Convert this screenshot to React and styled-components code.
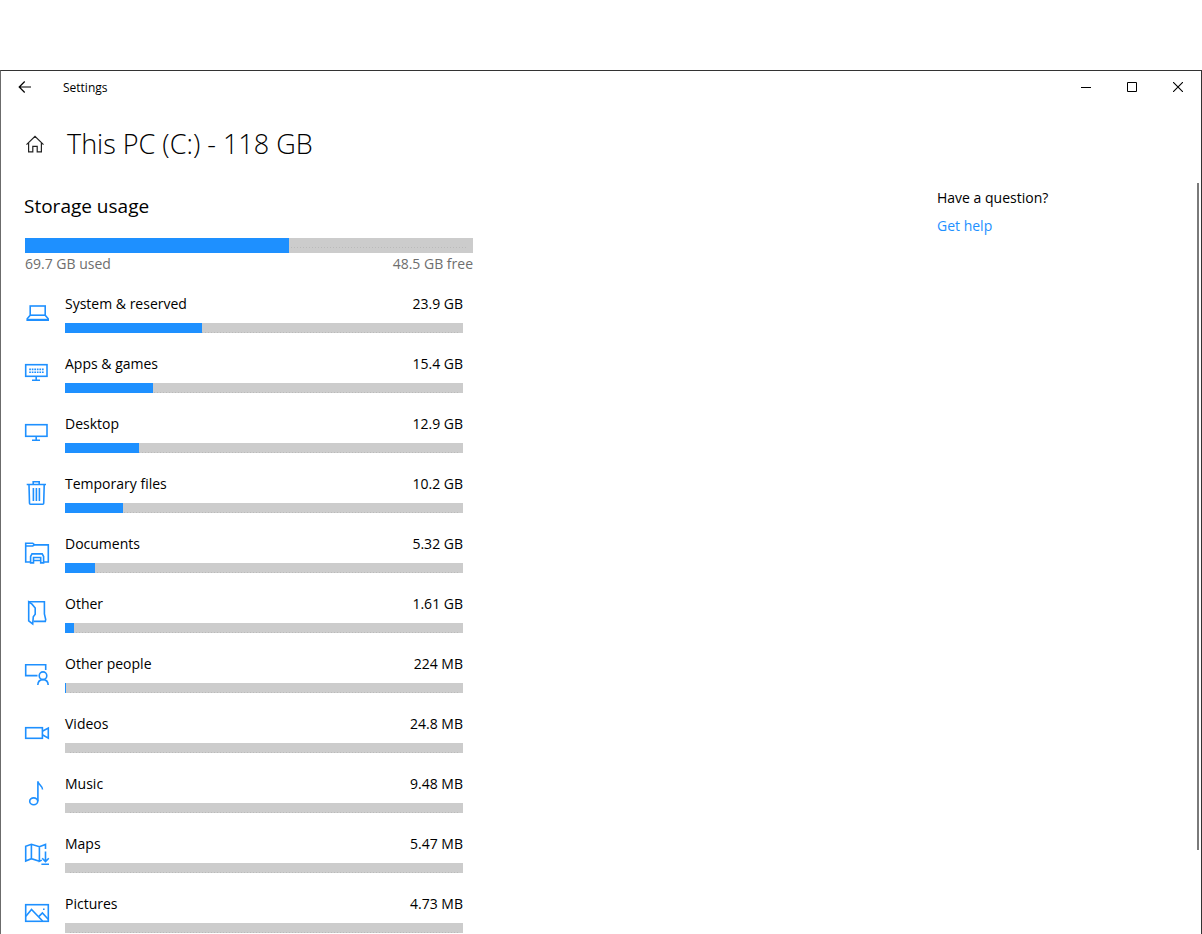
import React from "react";
import styled, { createGlobalStyle } from "styled-components";

const BLUE = "#1e90ff";

const GlobalStyle = createGlobalStyle`
  *, *::before, *::after { box-sizing: border-box; }
  html { overflow: hidden; background: #fff; }
  body {
    margin: 0;
    color: #000;
    font-family: "Open Sans", "Noto Sans", sans-serif;
    font-size: 14px;
    line-height: 20px;
  }
  h1, h2, p, ul { margin: 0; padding: 0; font-weight: 400; }
`;

const Desktop = styled.div`
  padding-top: 70px;
  height: 100vh;
  overflow: hidden;
`;

const Window = styled.div`
  position: relative;
  min-height: 100%;
  border: solid #333;
  border-width: 1px 1px 0 1px;
  border-left-color: #6b6b6b;
  background: #fff;
`;

const TitleBar = styled.header`
  display: flex;
  align-items: center;
  height: 32px;
`;

const BarButton = styled.button`
  display: grid;
  place-items: center;
  width: ${(p) => p.$width}px;
  height: 32px;
  padding: 0;
  border: 0;
  background: none;
  color: #000;
`;

const AppName = styled.span`
  flex: 1;
  padding: 2px 0 0 14px;
  font-size: 12px;
  line-height: 16px;
`;

const Heading = styled.div`
  display: flex;
  align-items: center;
  gap: 22px;
  height: 81px;
  padding-left: 24px;
`;

const HomeLink = styled.a`
  display: flex;
  color: #222;
`;

const PageTitle = styled.h1`
  font-size: 27px;
  line-height: 36px;
  font-weight: 300;
`;

const Content = styled.main`
  display: flex;
  justify-content: space-between;
`;

const Storage = styled.section`
  width: 472px;
  padding: 7px 0 0 24px;
`;

const SectionTitle = styled.h2`
  margin: 0 0 16px -1px;
  font-size: 19px;
  line-height: 30px;
`;

const Overview = styled.div`
  padding-top: 1px;
`;

const Track = styled.div`
  height: ${(p) => p.$height}px;
  background: repeating-linear-gradient(90deg, #bababa 0 1px, transparent 1px 3px)
    5px calc(100% - ${(p) => p.$inset}px) / calc(100% - 10px) 1px no-repeat #ccc;
`;

const Fill = styled.div`
  height: 100%;
  background: ${BLUE};
`;

const Totals = styled.div`
  display: flex;
  justify-content: space-between;
  margin-bottom: 20px;
  padding-top: 1px;
  color: #6e6e6e;
`;

const List = styled.ul`
  list-style: none;
`;

const Item = styled.li`
  display: grid;
  grid-template-columns: 40px 1fr;
  height: 60px;
  padding-right: 10px;
`;

const IconSlot = styled.span`
  margin: 6px 0 0 -1px;
  height: 26px;
`;

const ItemHead = styled.div`
  display: flex;
  justify-content: space-between;
  margin-bottom: 9px;
`;

const Help = styled.aside`
  display: flex;
  flex-direction: column;
  align-items: flex-start;
  gap: 8px;
  width: 264px;
  padding-top: 4px;
`;

const HelpLink = styled.a`
  color: ${BLUE};
  text-decoration: none;
`;

const ScrollThumb = styled.div`
  position: absolute;
  top: 112px;
  right: 2px;
  width: 2px;
  height: calc(100vh - 267px);
  background: #7a7a7a;
`;

const screen = (
  <>
    <rect x="1.7" y="4.7" width="21.3" height="11.6" />
    <path d="M12.2 16.5v3.5M8 20.2h8" />
  </>
);

const icons = {
  system: (
    <>
      <rect x="6.2" y="6" width="15" height="9.2" />
      <path d="M6 15.4L3.2 18.8v1.3h21v-1.3L21.4 15.4" />
      <path d="M3.4 19.6h20.6" />
    </>
  ),
  apps: (
    <>
      {screen}
      <path d="M5.2 9.4h14.6M5.2 12.2h14.6" strokeDasharray="1.7 .85" strokeWidth="1.6" />
    </>
  ),
  desktop: screen,
  trash: (
    <>
      <path d="M2.7 4.5H22M9.2 4.4V1.8h6v2.6M5 4.8l.5 18.4q0 1 1 1H18.7q1 0 1-1l.5-18.4" />
      <path d="M9.4 8v13M12.4 8v13M15.4 8v13" />
    </>
  ),
  documents: (
    <>
      <path d="M6 22H1.7V3.2h7l2 1.7h13.6V22H20M1.7 6h7l2-1.2" />
      <path d="M6.6 22.9V16.5l1.4-2.6h10.2l1.4 2.6v6.4h-2.9v-5.4H9.5v5.4zM9.8 20.5h6.8" />
    </>
  ),
  other: (
    <>
      <path d="M5 1.7h15.4V14l1.3 5.5-.4 1.9H9.6" />
      <path d="M4.7 1.9v19l4 3.1.6-7.3 1.9-2.4V8L8 4.2z" />
    </>
  ),
  people: (
    <>
      <path d="M13.5 15.6H1.7V4.7h20v5.3" />
      <circle cx="19" cy="15.7" r="3.8" />
      <path d="M13.8 25c.2-3.6 2.3-5.4 5.2-5.4s5 1.8 5.2 5.4" />
    </>
  ),
  videos: (
    <>
      <rect x="1.7" y="7.7" width="16.7" height="10.6" />
      <path d="M18.8 11l5.5-3v10.2l-5.5-3.2" />
    </>
  ),
  music: (
    <>
      <ellipse cx="9.7" cy="21.3" rx="4" ry="3.4" />
      <path d="M13.9 21.3V1.2c.3 3.6 4.6 4.3 4.6 8.3" />
    </>
  ),
  maps: (
    <>
      <path d="M15.4 21.3l-8-2.6-5.7 2.4V6.3l5.7-2 8 2.4 6.1-2.2V9M7.4 4.3v14.4M15.4 6.7v14.6l2.4-1.2" />
      <path d="M21.5 11.5v10M18.2 18.3l3.3 3.3 3.3-3.3M17.4 24.2H25" />
    </>
  ),
  pictures: (
    <>
      <rect x="1.7" y="4.7" width="22.6" height="16.6" />
      <path d="M1.9 16.3l5.6-6.8L18.6 21M15 16.4l3.4-3.4 5.8 6.2" />
      <path d="M19 9.2h1.6" />
    </>
  ),
};

function ItemIcon({ name }) {
  return (
    <svg width="26" height="26" viewBox="0 0 26 26" fill="none" stroke={BLUE} strokeWidth="1.6" aria-hidden="true">
      {icons[name]}
    </svg>
  );
}

const categories = [
  ["system", "System & reserved", "23.9 GB", 34.4],
  ["apps", "Apps & games", "15.4 GB", 22.1],
  ["desktop", "Desktop", "12.9 GB", 18.6],
  ["trash", "Temporary files", "10.2 GB", 14.6],
  ["documents", "Documents", "5.32 GB", 7.6],
  ["other", "Other", "1.61 GB", 2.3],
  ["people", "Other people", "224 MB", 0.3],
  ["videos", "Videos", "24.8 MB", 0],
  ["music", "Music", "9.48 MB", 0],
  ["maps", "Maps", "5.47 MB", 0],
  ["pictures", "Pictures", "4.73 MB", 0],
];

function UsageBar({ label, percent, height = 10, inset = 0 }) {
  return (
    <Track $height={height} $inset={inset} role="meter" aria-label={label} aria-valuemin={0} aria-valuemax={100} aria-valuenow={percent}>
      <Fill style={{ width: `${percent}%` }} />
    </Track>
  );
}

export default function App() {
  return (
    <Desktop>
      <GlobalStyle />
      <Window>
        <TitleBar>
          <BarButton $width={48} aria-label="Back">
            <svg width="14" height="14" viewBox="0 0 14 14" fill="none" stroke="currentColor" strokeWidth="1.2">
              <path d="M1.5 7H13M6.7 1.5L1.2 7l5.5 5.5" />
            </svg>
          </BarButton>
          <AppName>Settings</AppName>
          <BarButton $width={46} aria-label="Minimize">
            <svg width="10" height="10" stroke="currentColor"><path d="M0 5.5h10" /></svg>
          </BarButton>
          <BarButton $width={46} aria-label="Maximize">
            <svg width="10" height="10" fill="none" stroke="currentColor"><path d="M.5.5h9v9h-9z" /></svg>
          </BarButton>
          <BarButton $width={46} aria-label="Close">
            <svg width="10" height="10" stroke="currentColor" strokeWidth="1.1"><path d="M0 0l10 10M10 0L0 10" /></svg>
          </BarButton>
        </TitleBar>
        <Heading>
          <HomeLink href="#home" aria-label="Home">
            <svg width="20" height="20" viewBox="0 0 20 20" fill="none" stroke="currentColor" strokeWidth="1.2">
              <path d="M1.5 10.6L10 2.4l8.5 8.2M3.6 8.8v9.1h4.2v-5.5h4.4v5.5h4.2V8.8" />
            </svg>
          </HomeLink>
          <PageTitle>This PC (C:) - 118 GB</PageTitle>
        </Heading>
        <Content>
          <Storage>
            <SectionTitle>Storage usage</SectionTitle>
            <Overview>
              <UsageBar label="Storage used" percent={59} height={15} inset={5} />
              <Totals>
                <span>69.7 GB used</span>
                <span>48.5 GB free</span>
              </Totals>
            </Overview>
            <List>
              {categories.map(([icon, name, size, percent]) => (
                <Item key={icon}>
                  <IconSlot><ItemIcon name={icon} /></IconSlot>
                  <div>
                    <ItemHead>
                      <span>{name}</span>
                      <span>{size}</span>
                    </ItemHead>
                    <UsageBar label={name} percent={percent} />
                  </div>
                </Item>
              ))}
            </List>
          </Storage>
          <Help>
            <p>Have a question?</p>
            <HelpLink href="#help">Get help</HelpLink>
          </Help>
        </Content>
        <ScrollThumb />
      </Window>
    </Desktop>
  );
}
